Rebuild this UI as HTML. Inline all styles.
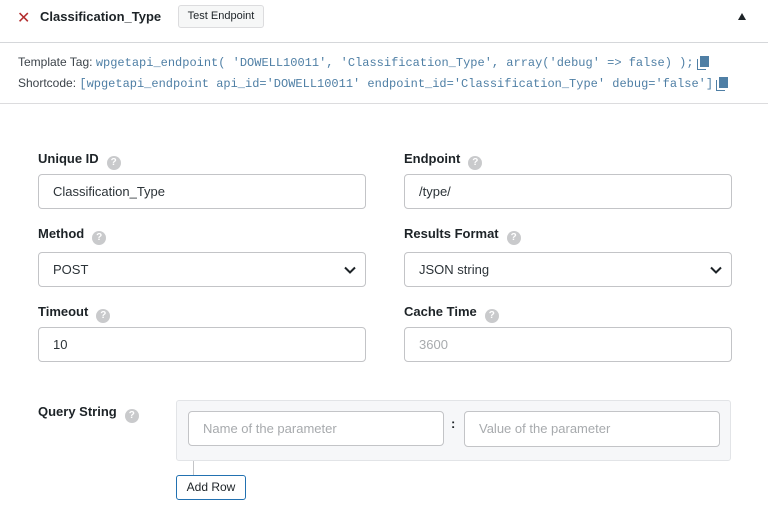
<!DOCTYPE html>
<html><head><style>
*{box-sizing:border-box;margin:0;padding:0}
body{width:768px;height:509px;overflow:hidden;background:#fff;font-family:"Liberation Sans",sans-serif;color:#1d2327;position:relative}
.a{position:absolute}
.hdr{left:0;top:0;width:768px;height:43px;border-bottom:1px solid #d5d7da;background:#fff}
.code{left:0;top:43px;width:768px;height:61px;background:#fff;border-bottom:1px solid #dcdcde;font-size:12px;color:#3c434a}
.mono{font-family:"Liberation Mono",monospace;color:#4f7fa5;font-size:12px}
.lbl{font-size:13px;font-weight:bold;color:#1d2327}
.q{display:inline-block;width:14px;height:14px;border-radius:50%;background:#c9cacc;color:#fff;font-size:10px;text-align:center;line-height:14px;margin-left:8px;vertical-align:-2px;font-weight:bold}
.in{border:1px solid #c3c4c7;border-radius:4px;height:35px;font-size:13px;padding-left:14px;line-height:33px;background:#fff;color:#2c3338}
.ph{color:#a7aaad}
.chev{position:absolute;right:8px;top:10px}
.copy{display:inline-block;width:9px;height:11px;background:#4f7fa5;margin-left:6px;vertical-align:-1px;box-shadow:-2px 2px 0 -0px #fff,-3px 3px 0 0 #4f7fa5}
</style></head><body>
<div class="a hdr">
 <div class="a" style="left:17px;top:8px;font-size:16px;color:#b32d2e">✕</div>
 <div class="a" style="left:40px;top:9px;font-size:13px;font-weight:bold;color:#1d2327">Classification_Type</div>
 <div class="a" style="left:178px;top:5px;width:86px;height:23px;border:1px solid #dcdcde;border-radius:3px;background:#f6f7f7;font-size:11px;text-align:center;line-height:21px">Test Endpoint</div>
 <div class="a" style="left:738px;top:13px;width:0;height:0;border-left:4.5px solid transparent;border-right:4.5px solid transparent;border-bottom:7px solid #1d2327"></div>
</div>
<div class="a code">
 <div class="a" style="left:18px;top:12px;white-space:nowrap">Template Tag: <span class="mono">wpgetapi_endpoint( 'DOWELL10011', 'Classification_Type', array('debug' =&gt; false) );</span><span class="copy"></span></div>
 <div class="a" style="left:18px;top:33px;white-space:nowrap">Shortcode: <span class="mono">[wpgetapi_endpoint api_id='DOWELL10011' endpoint_id='Classification_Type' debug='false']</span><span class="copy"></span></div>
</div>

<div class="a lbl" style="left:38px;top:151px">Unique ID<span class="q">?</span></div>
<div class="a in" style="left:38px;top:174px;width:328px">Classification_Type</div>
<div class="a lbl" style="left:404px;top:151px">Endpoint<span class="q">?</span></div>
<div class="a in" style="left:404px;top:174px;width:328px">/type/</div>

<div class="a lbl" style="left:38px;top:226px">Method<span class="q">?</span></div>
<div class="a in" style="left:38px;top:252px;width:328px">POST<svg class="chev" width="14" height="14" viewBox="0 0 14 14"><path d="M2 4.5l5 5 5-5" stroke="#1d2327" stroke-width="2" fill="none"/></svg></div>
<div class="a lbl" style="left:404px;top:226px">Results Format<span class="q">?</span></div>
<div class="a in" style="left:404px;top:252px;width:328px">JSON string<svg class="chev" width="14" height="14" viewBox="0 0 14 14"><path d="M2 4.5l5 5 5-5" stroke="#1d2327" stroke-width="2" fill="none"/></svg></div>

<div class="a lbl" style="left:38px;top:304px">Timeout<span class="q">?</span></div>
<div class="a in" style="left:38px;top:327px;width:328px">10</div>
<div class="a lbl" style="left:404px;top:304px">Cache Time<span class="q">?</span></div>
<div class="a in ph" style="left:404px;top:327px;width:328px">3600</div>

<div class="a lbl" style="left:38px;top:404px">Query String<span class="q">?</span></div>
<div class="a" style="left:176px;top:400px;width:555px;height:61px;background:#f6f7f9;border:1px solid #e2e4e7;border-radius:3px"></div>
<div class="a in ph" style="left:188px;top:411px;width:256px;height:35px">Name of the parameter</div>
<div class="a" style="left:451px;top:416px;font-weight:bold;font-size:13px">:</div>
<div class="a in ph" style="left:464px;top:411px;width:256px;height:36px">Value of the parameter</div>
<div class="a" style="left:193px;top:461px;width:1px;height:14px;background:#c3c4c7"></div>
<div class="a" style="left:176px;top:475px;width:70px;height:25px;border:1px solid #2271b1;border-radius:3px;font-size:12px;text-align:center;line-height:23px;color:#1d2327;background:#fff">Add Row</div>
</body></html>
